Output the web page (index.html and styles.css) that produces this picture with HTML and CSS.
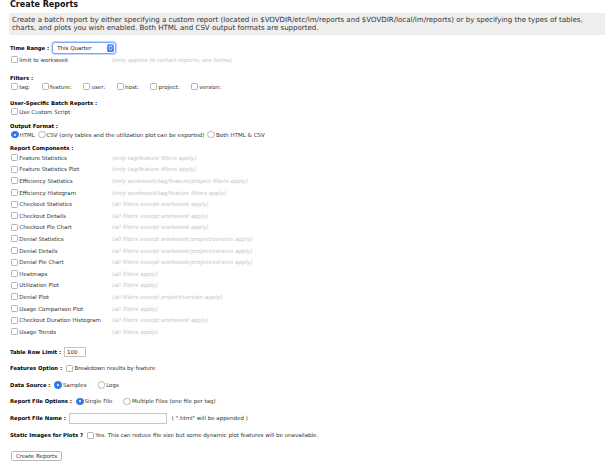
FILE: index.html
```html
<!DOCTYPE html>
<html>
<head>
<meta charset="utf-8">
<title>Create Reports</title>
<link rel="stylesheet" href="styles.css">
</head>
<body>
<div class="page">
  <h1 class="title">Create Reports</h1>
  <div class="intro">Create a batch report by either specifying a custom report (located in $VOVDIR/etc/lm/reports and $VOVDIR/local/lm/reports) or by specifying the types of tables, charts, and plots you wish enabled. Both HTML and CSV output formats are supported.</div>

  <div class="form">
    <div class="time-row">
      <span class="lbl">Time Range :</span>
      <div class="select">
        <span class="select-text">This Quarter</span>
        <span class="select-arrow">
          <svg width="7" height="8" viewBox="0 0 7 8"><path d="M2 3.2 L3.5 1.8 L5 3.2 M2 4.8 L3.5 6.2 L5 4.8" fill="none" stroke="#fff" stroke-width="0.9" stroke-linecap="round" stroke-linejoin="round"/></svg>
        </span>
      </div>
    </div>
    <div class="grid-row limit-row">
      <label class="opt"><span class="cb"></span>limit to workweek</label>
      <span class="hint">(only applies to certain reports; see below)</span>
    </div>

    <div class="sec sec-filters">
      <div class="lbl">Filters :</div>
      <div class="opts filters">
        <label class="opt"><span class="cb"></span>tag:</label>
        <label class="opt"><span class="cb"></span>feature:</label>
        <label class="opt"><span class="cb"></span>user:</label>
        <label class="opt"><span class="cb"></span>host:</label>
        <label class="opt"><span class="cb"></span>project:</label>
        <label class="opt"><span class="cb"></span>version:</label>
      </div>
    </div>

    <div class="sec sec-user">
      <div class="lbl">User-Specific Batch Reports :</div>
      <div class="opts">
        <label class="opt"><span class="cb"></span>Use Custom Script</label>
      </div>
    </div>

    <div class="sec sec-output">
      <div class="lbl">Output Format :</div>
      <div class="opts radios">
        <label class="opt"><span class="rb on"></span>HTML</label>
        <label class="opt"><span class="rb"></span>CSV (only tables and the utilization plot can be exported)</label>
        <label class="opt"><span class="rb"></span>Both HTML &amp; CSV</label>
      </div>
    </div>

    <div class="sec sec-comps">
      <div class="lbl">Report Components :</div>
      <div class="comps">
        <div class="grid-row comp"><label class="opt"><span class="cb"></span>Feature Statistics</label><span class="hint">(only tag/feature filters apply)</span></div>
        <div class="grid-row comp"><label class="opt"><span class="cb"></span>Feature Statistics Plot</label><span class="hint">(only tag/feature filters apply)</span></div>
        <div class="grid-row comp"><label class="opt"><span class="cb"></span>Efficiency Statistics</label><span class="hint">(only workweek/tag/feature/project filters apply)</span></div>
        <div class="grid-row comp"><label class="opt"><span class="cb"></span>Efficiency Histogram</label><span class="hint">(only workweek/tag/feature filters apply)</span></div>
        <div class="grid-row comp"><label class="opt"><span class="cb"></span>Checkout Statistics</label><span class="hint">(all filters except workweek apply)</span></div>
        <div class="grid-row comp"><label class="opt"><span class="cb"></span>Checkout Details</label><span class="hint">(all filters except workweek apply)</span></div>
        <div class="grid-row comp"><label class="opt"><span class="cb"></span>Checkout Pie Chart</label><span class="hint">(all filters except workweek apply)</span></div>
        <div class="grid-row comp"><label class="opt"><span class="cb"></span>Denial Statistics</label><span class="hint">(all filters except workweek/project/version apply)</span></div>
        <div class="grid-row comp"><label class="opt"><span class="cb"></span>Denial Details</label><span class="hint">(all filters except workweek/project/version apply)</span></div>
        <div class="grid-row comp"><label class="opt"><span class="cb"></span>Denial Pie Chart</label><span class="hint">(all filters except workweek/project/version apply)</span></div>
        <div class="grid-row comp"><label class="opt"><span class="cb"></span>Heatmaps</label><span class="hint">(all filters apply)</span></div>
        <div class="grid-row comp"><label class="opt"><span class="cb"></span>Utilization Plot</label><span class="hint">(all filters apply)</span></div>
        <div class="grid-row comp"><label class="opt"><span class="cb"></span>Denial Plot</label><span class="hint">(all filters except project/version apply)</span></div>
        <div class="grid-row comp"><label class="opt"><span class="cb"></span>Usage Comparison Plot</label><span class="hint">(all filters apply)</span></div>
        <div class="grid-row comp"><label class="opt"><span class="cb"></span>Checkout Duration Histogram</label><span class="hint">(all filters except workweek apply)</span></div>
        <div class="grid-row comp"><label class="opt"><span class="cb"></span>Usage Trends</label><span class="hint">(all filters apply)</span></div>
      </div>
    </div>

    <div class="field field-first">
      <span class="lbl">Table Row Limit :</span>
      <span class="input input-small">100</span>
    </div>
    <div class="field">
      <span class="lbl">Features Option :</span>
      <label class="opt"><span class="cb"></span>Breakdown results by feature</label>
    </div>
    <div class="field">
      <span class="lbl">Data Source :</span>
      <label class="opt"><span class="rb on"></span>Samples</label>
      <label class="opt opt-spaced"><span class="rb"></span>Logs</label>
    </div>
    <div class="field">
      <span class="lbl">Report File Options :</span>
      <label class="opt"><span class="rb on"></span>Single File</label>
      <label class="opt opt-spaced"><span class="rb"></span>Multiple Files (one file per tag)</label>
    </div>
    <div class="field field-tall">
      <span class="lbl">Report File Name :</span>
      <span class="input input-wide"></span>
      <span class="note">( ".html" will be appended )</span>
    </div>
    <div class="field">
      <span class="lbl">Static Images for Plots ?</span>
      <label class="opt"><span class="cb"></span>Yes. This can reduce file size but some dynamic plot features will be unavailable.</label>
    </div>
    <div class="actions">
      <button class="btn" type="button">Create Reports</button>
    </div>
  </div>
</div>
</body>
</html>
```

FILE: styles.css
```css
html, body {
  margin: 0;
  padding: 0;
  background: #ffffff;
}

body {
  font-family: "DejaVu Sans", Verdana, sans-serif;
  color: #222;
}

.page {
  padding: 0 9px;
}

.title {
  margin: 0;
  padding-left: 1px;
  font-size: 8px;
  line-height: 10px;
  font-weight: bold;
  color: #111;
}

.intro {
  margin-top: 3px;
  background: #eeeeee;
  padding: 3px 3px;
  font-size: 7.05px;
  line-height: 8px;
  color: #333;
}

.form {
  padding-left: 1px;
  font-size: 5.5px;
}

.lbl {
  font-weight: bold;
  font-size: 5.3px;
  line-height: 8px;
  color: #000;
  white-space: nowrap;
}

.time-row {
  margin-top: 7px;
  height: 12px;
  display: flex;
  align-items: center;
  gap: 3px;
}

.select {
  width: 64px;
  height: 12px;
  box-sizing: border-box;
  border: 1px solid #7fa9ee;
  border-radius: 3px;
  box-shadow: 0 0 0 1px #c4d9f8;
  display: flex;
  align-items: center;
  justify-content: space-between;
  padding: 0 1px 0 4px;
  background: #fff;
}

.select-text {
  font-size: 5.5px;
  color: #222;
}

.select-arrow {
  width: 7px;
  height: 8px;
  border-radius: 2px;
  background: linear-gradient(#5b9bf8, #2f74ec);
  display: flex;
}

.grid-row {
  display: grid;
  grid-template-columns: 102px 1fr;
  align-items: center;
}

.limit-row {
  margin-top: 1px;
  height: 9px;
}

.opt {
  display: inline-flex;
  align-items: center;
  white-space: nowrap;
  font-size: 5.5px;
  color: #333;
}

.cb {
  width: 5px;
  height: 5px;
  border: 0.6px solid #b4b4b4;
  border-radius: 1.3px;
  background: #fff;
  margin: 0 1.3px 0 1px;
  flex: none;
}

.rb {
  width: 5.6px;
  height: 5.6px;
  border: 0.6px solid #b4b4b4;
  border-radius: 50%;
  background: #fff;
  margin: 0 1px 0 1px;
  flex: none;
  box-sizing: content-box;
  position: relative;
}

.rb.on {
  background: #2f7df6;
  border-color: #2a6fde;
}

.rb.on::after {
  content: "";
  position: absolute;
  left: 50%;
  top: 50%;
  width: 2px;
  height: 2px;
  margin: -1px 0 0 -1px;
  border-radius: 50%;
  background: #fff;
}

.hint {
  font-style: italic;
  font-size: 5.6px;
  color: #c4c4c4;
  white-space: nowrap;
}

.opts {
  display: flex;
  align-items: center;
  height: 9px;
}

.filters {
  gap: 10.5px;
}

.radios {
  gap: 2px;
}

.sec-filters { margin-top: 10px; }
.sec-user { margin-top: 8px; }
.sec-output { margin-top: 6px; }
.sec-comps { margin-top: 5px; }

.comp {
  height: 11.6px;
}

.field {
  display: flex;
  align-items: center;
  gap: 3px;
  height: 10px;
  margin-top: 6.5px;
}

.field-first {
  margin-top: 9.4px;
}

.field-tall {
  height: 11px;
}

.input {
  display: inline-flex;
  align-items: center;
  box-sizing: border-box;
  border: 0.7px solid #c6c6c6;
  background: #fff;
  font-size: 5.5px;
  color: #222;
  padding-left: 2px;
}

.input-small {
  width: 22px;
  height: 10px;
}

.input-wide {
  width: 98px;
  height: 11px;
}

.note {
  margin-left: 2px;
  font-size: 5.5px;
  color: #333;
  white-space: nowrap;
}

.opt-spaced {
  margin-left: 7px;
}

.actions {
  margin-top: 11px;
  padding-left: 1px;
}

.btn {
  font-family: "DejaVu Sans", Verdana, sans-serif;
  font-size: 5.5px;
  color: #333;
  background: #fff;
  border: 0.7px solid #b8b8b8;
  border-radius: 2px;
  height: 9.5px;
  width: 51px;
  padding: 0;
  display: block;
}
```
